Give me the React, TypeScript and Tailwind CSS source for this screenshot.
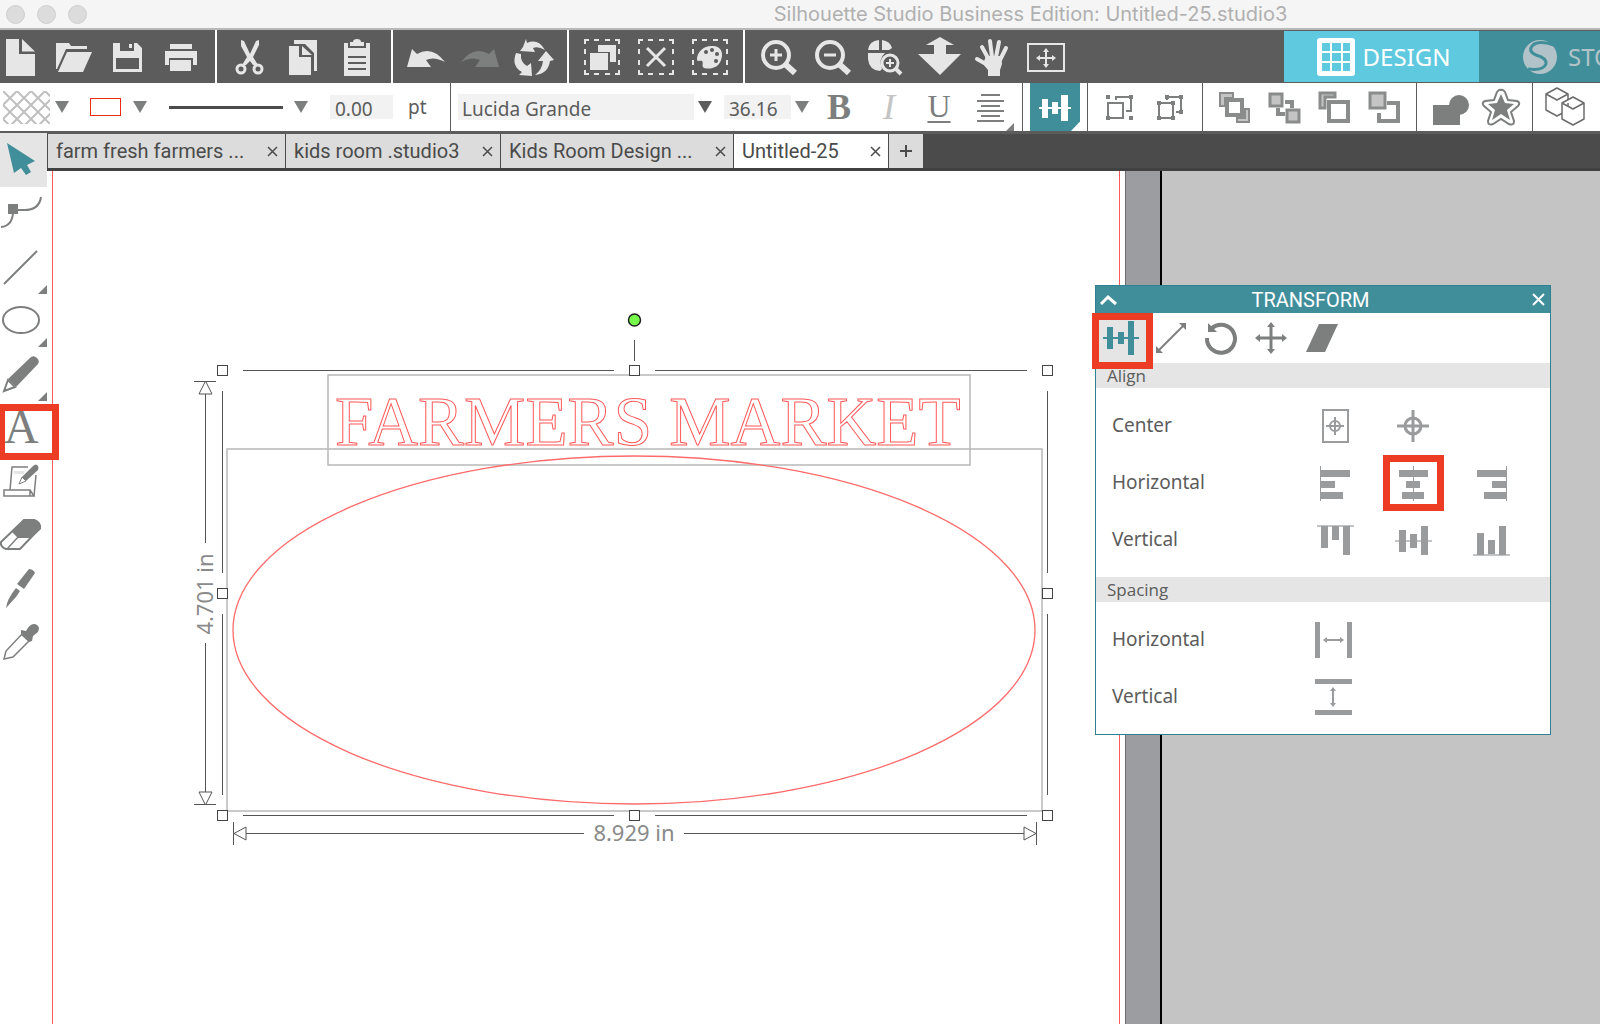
import { useState } from "react";
import type { ReactNode } from "react";

interface IconProps {
	children: ReactNode;
	size?: number;
	className?: string;
}

function Icon({ children, size = 36, className = "" }: IconProps) {
	return (
		<svg
			width={size}
			height={size}
			viewBox={`0 0 ${size} ${size}`}
			className={`block shrink-0 overflow-visible ${className}`}
			fill="currentColor"
			aria-hidden="true"
		>
			{children}
		</svg>
	);
}

interface ToolProps {
	label: string;
	children: ReactNode;
	className?: string;
}

function Tool({ label, children, className = "" }: ToolProps) {
	return (
		<button type="button" aria-label={label} className={`shrink-0 ${className}`}>
			{children}
		</button>
	);
}

function Arrow({ className = "text-[#7d7f7e]" }: { className?: string }) {
	return (
		<svg width="14" height="12" className={`block shrink-0 ${className}`} fill="currentColor" aria-hidden="true">
			<path d="M0 0H14L7 12Z" />
		</svg>
	);
}

function Highlight({ className = "" }: { className?: string }) {
	return (
		<span
			className={`pointer-events-none absolute z-20 h-14 w-[61px] border-[7px] border-[#ec3c23] ${className}`}
		/>
	);
}

const fileTools = [
	{
		label: "New",
		icon: (
			<>
				<path d="M4 0H17V15H33V37H4Z" />
				<path d="M20 0L33 12.500H20Z" />
			</>
		),
	},
	{
		label: "Open",
		icon: (
			<>
				<path d="M0 4H13L15 7H31V10H10L1 30L0 30Z" />
				<path d="M11 13H36L27 33H2Z" />
			</>
		),
	},
	{
		label: "Save",
		icon: (
			<path
				fillRule="evenodd"
				d="M3 4H10V12H24V4H27L32 9V33H3ZM6 19H29V30H6ZM19 5H22V9H19Z"
			/>
		),
	},
	{
		label: "Print",
		icon: (
			<>
				<rect x="6" y="5" width="22" height="5" />
				<path d="M1 12H33V26H29V19H5V26H1Z" />
				<rect x="6" y="21" width="21" height="11" />
			</>
		),
	},
];

const editTools = [
	{
		label: "Cut",
		icon: (
			<>
				<path d="M9 1L12 2L18 15L24 2L27 1L27 6L21 18L26 26H21L18 22L14 26H10L15 18L9 7Z" />
				<circle cx="9" cy="30" r="4" fill="none" stroke="currentColor" strokeWidth="3" />
				<circle cx="26" cy="30" r="4" fill="none" stroke="currentColor" strokeWidth="3" />
			</>
		),
	},
	{
		label: "Copy",
		icon: (
			<>
				<path d="M8 1H31V32H28V14L19 5H8Z" />
				<path d="M3 7H13V18H25V36H3Z" />
				<path d="M16 7L26 16H16Z" />
			</>
		),
	},
	{
		label: "Paste",
		icon: (
			<>
				<path d="M4 4H8V9H26V4H30V37H4Z" />
				<path d="M10 3H13Q13 0 17 0Q21 0 21 3H24V7H10Z" />
				<path d="M8 18H26M8 24H26M8 30H26" stroke="#5b5c5b" strokeWidth="2" />
			</>
		),
	},
];

const historyTools = [
	{
		label: "Undo",
		icon: <path d="M4 10L9 15Q24 6 37 23Q26 17 18 21L23 28H-1Z" />,
	},
	{
		label: "Redo",
		icon: <path fill="#7d7f7e" d="M32 10L27 15Q12 6 -1 23Q10 17 18 21L13 28H37Z" />,
	},
	{
		label: "Sync",
		icon: (
			<>
				<path d="M10 0L11 4Q22 -1 29 11Q22 7 17 9L19 13L4 12L7 8Z" />
				<path d="M0 14Q-5 27 6 33L3 36L16 37L15 24L11 27Q4 23 5 15Z" />
				<path d="M30 12L38 21L34 22Q32 35 19 36Q26 31 27 22L22 22Z" />
			</>
		),
	},
];

const selectTools = [
	{
		label: "Select all",
		icon: (
			<>
				<path d="M14 6H32V23H26V13H14Z" />
				<rect x="6" y="14" width="18" height="17" />
			</>
		),
	},
	{
		label: "Deselect",
		icon: <path d="M9 9L27 27M27 9L9 27" stroke="currentColor" strokeWidth="3" />,
	},
	{
		label: "Select by color",
		icon: (
			<>
				<path d="M19 7C29 6 32 14 29 21C27 28 19 31 12 29C9 27 12 24 10 22C7 21 5 24 5 19C6 12 12 7 19 7Z" />
				<g fill="#5b5c5b">
					<circle cx="14" cy="13" r="2" />
					<circle cx="20" cy="11" r="2" />
					<circle cx="25" cy="15" r="2" />
					<circle cx="24" cy="22" r="2" />
				</g>
			</>
		),
	},
];

const viewTools = [
	{
		label: "Zoom in",
		icon: (
			<>
				<circle cx="16" cy="16" r="13" fill="none" stroke="currentColor" strokeWidth="4" />
				<path d="M25 25L35 34" stroke="currentColor" strokeWidth="6" />
				<path d="M16 10V22M10 16H22" stroke="currentColor" strokeWidth="3" />
			</>
		),
	},
	{
		label: "Zoom out",
		icon: (
			<>
				<circle cx="16" cy="16" r="13" fill="none" stroke="currentColor" strokeWidth="4" />
				<path d="M25 25L35 34" stroke="currentColor" strokeWidth="6" />
				<path d="M10 16H22" stroke="currentColor" strokeWidth="3" />
			</>
		),
	},
	{
		label: "Zoom to selection",
		icon: (
			<>
				<path d="M11 1V11H0Q1 2 11 1ZM14 1Q22 2 24 9L21 11H14Z" />
				<path d="M0 14H17Q10 20 14 30L12 32Q1 31 0 20Z" />
				<circle cx="22" cy="24" r="8" fill="none" stroke="currentColor" strokeWidth="3" />
				<path d="M28 30L33 35" stroke="currentColor" strokeWidth="4" />
				<path d="M22 20V28M18 24H26" stroke="currentColor" strokeWidth="2" />
			</>
		),
	},
	{
		label: "Zoom drag",
		icon: <path d="M18 -2L32 6H24V15H39L18 36L-4 15H12V6H4Z" />,
	},
	{
		label: "Pan",
		icon: (
			<>
				<path d="M12 37V31L7 25L10 17H25L26 25L24 31V37Z" />
				<path
					d="M10 25L1 20M12 19L6 8M16 18L14 2M20 18L23 3M24 21L30 9"
					stroke="currentColor"
					strokeWidth="4"
					strokeLinecap="round"
				/>
			</>
		),
	},
	{
		label: "Fit to page",
		icon: (
			<>
				<rect x="-2" y="5" width="36" height="27" fill="none" stroke="currentColor" strokeWidth="2" />
				<path d="M16 12V26M8 19H24" stroke="currentColor" strokeWidth="2" />
				<path d="M16 9L19 13H13ZM16 29L19 25H13ZM6 19L10 16V22ZM26 19L22 16V22Z" />
			</>
		),
	},
];

interface ToolGroupProps {
	tools: typeof fileTools;
	className?: string;
	dashed?: boolean;
}

function ToolGroup({ tools, className = "", dashed = false }: ToolGroupProps) {
	return (
		<div className={`flex shrink-0 items-center gap-[18px] text-[#e6e6e6] ${className}`}>
			{tools.map((tool) => (
				<Tool key={tool.label} label={tool.label}>
					<Icon>
						{dashed && (
							<path
								d="M1 5V1H5M10 1H15M21 1H26M31 1H35V5M35 10V15M35 21V26M35 31V35H31M26 35H21M15 35H10M5 35H1V31M1 26V21M1 15V10"
								fill="none"
								stroke="currentColor"
								strokeWidth="2"
							/>
						)}
						{tool.icon}
					</Icon>
				</Tool>
			))}
		</div>
	);
}

const arrangeTools = [
	{
		label: "Bring forward",
		icon: (
			<>
				<path d="M1 1H14V6H6V14H1Z" fill="#c4c4c4" stroke="currentColor" strokeWidth="2" />
				<path d="M30 17V30H18V26H26V17Z" fill="#c4c4c4" stroke="currentColor" strokeWidth="2" />
				<rect x="8" y="8" width="15" height="15" fill="#fff" stroke="currentColor" strokeWidth="4" />
			</>
		),
	},
	{
		label: "Send backward",
		icon: (
			<>
				<path d="M16 10H23V16M9 16V22H16" fill="none" stroke="currentColor" strokeWidth="4" />
				<rect x="1" y="2" width="12" height="12" fill="#c4c4c4" stroke="currentColor" strokeWidth="3" />
				<rect x="18" y="18" width="12" height="12" fill="#c4c4c4" stroke="currentColor" strokeWidth="3" />
			</>
		),
	},
	{
		label: "Bring to front",
		icon: (
			<>
				<path d="M1 1H16V5H6V16H1Z" fill="#c4c4c4" stroke="currentColor" strokeWidth="3" />
				<rect x="10" y="10" width="19" height="19" fill="#fff" stroke="currentColor" strokeWidth="4" />
			</>
		),
	},
	{
		label: "Send to back",
		icon: (
			<>
				<path d="M18 11H29V29H10V21" fill="none" stroke="currentColor" strokeWidth="4" />
				<rect x="1" y="1" width="15" height="15" fill="#c4c4c4" stroke="currentColor" strokeWidth="3" />
			</>
		),
	},
];

function QuickBar({ font, setFont }: { font: string; setFont: (value: string) => void }) {
	return (
		<div className="flex h-12 items-center overflow-hidden bg-white font-['Noto_Sans',sans-serif] text-[19px] text-[#5b5c5b]">
			<div className="flex h-full shrink-0 items-center pl-[3px]">
				<Tool label="Fill color" className="flex items-center gap-[5px]">
					<svg width="47" height="33" className="block" aria-hidden="true">
						<defs>
							<pattern id="hatch" width="14" height="14" patternUnits="userSpaceOnUse">
								<path d="M0 0L14 14M14 0L0 14" stroke="#bfbfbf" strokeWidth="2" />
							</pattern>
						</defs>
						<rect width="47" height="33" fill="url(#hatch)" />
					</svg>
					<Arrow />
				</Tool>
				<Tool label="Line color" className="ml-[21px] flex items-center gap-3">
					<span className="block h-[18px] w-[31px] border border-[#ee2a12]" />
					<Arrow />
				</Tool>
				<Tool label="Line style" className="ml-[22px] flex items-center gap-[11px]">
					<span className="block h-[3px] w-[114px] bg-[#4a4b4a]" />
					<Arrow />
				</Tool>
				<input
					aria-label="Line thickness"
					defaultValue="0.00"
					className="ml-[22px] h-6 w-[63px] bg-[#f2f2f2] pt-1 pl-[5px] outline-none"
				/>
				<span className="ml-[15px] w-[42px]">pt</span>
			</div>

			<div className="flex h-full shrink-0 items-center border-l border-[#5b5c5b] pl-[7px]">
				<select
					aria-label="Font"
					value={font}
					onChange={(e) => setFont(e.target.value)}
					className="h-[26px] w-[236px] appearance-none bg-[#f2f2f2] pt-1 pl-1 leading-[22px] outline-none"
				>
					<option>Lucida Grande</option>
					<option>Times</option>
				</select>
				<Arrow className="ml-1 text-[#5b5c5b]" />
				<input
					aria-label="Font size"
					defaultValue="36.16"
					className="ml-3 h-6 w-[67px] bg-[#f2f2f2] pt-1 pl-[5px] outline-none"
				/>
				<Arrow className="ml-1 text-[#7d7f7e]" />
				<div className="flex h-full items-center font-['Liberation_Serif',serif] text-4xl text-[#7d7f7e]">
					<Tool label="Bold" className="w-[60px] font-bold">B</Tool>
					<Tool label="Italic" className="w-10 italic text-[#c4c4c4]">I</Tool>
					<Tool label="Underline" className="mr-2 w-[60px] text-[32px] underline decoration-2 underline-offset-4">U</Tool>
				</div>
				<Tool label="Justify" className="flex h-full items-center text-[#7d7f7e]">
					<Icon size={27}>
						<path d="M4 1H23M0 7H27M4 12H23M0 17H27M4 22H23M0 27H27" stroke="currentColor" strokeWidth="2" />
					</Icon>
					<svg width="8" height="8" className="ml-[2px] self-end" fill="currentColor" aria-hidden="true">
						<path d="M8 0V8H0Z" />
					</svg>
				</Tool>
			</div>

			<div className="ml-2 flex h-full shrink-0 items-center border-x border-[#5b5c5b] px-[7px]">
				<button
					type="button"
					aria-label="Transform"
					className="flex h-full w-[50px] items-center justify-center bg-[#418e9b] text-white [clip-path:polygon(0_0,100%_0,100%_80%,82%_100%,0_100%)]"
				>
					<Icon size={32}>
						<rect x="3" y="8" width="6" height="19" />
						<rect x="13" y="11" width="6" height="12" />
						<rect x="22" y="4" width="7" height="26" />
						<rect x="0" y="16" width="32" height="2" />
					</Icon>
				</button>
			</div>

			<div className="flex h-full shrink-0 items-center gap-6 px-[18px] text-[#7d7f7e]">
				<Tool label="Group">
					<Icon size={27}>
						<path d="M0 1H4V5H0ZM23 1H27V5H23ZM23 22H27V26H23ZM0 22H4V26H0Z" />
						<path d="M2 9H17V24H2ZM10 6V3H25V17H20" fill="none" stroke="currentColor" strokeWidth="2" />
					</Icon>
				</Tool>
				<Tool label="Ungroup">
					<Icon size={27}>
						<path d="M0 7H4V11H0ZM14 7H18V11H14ZM0 22H4V26H0ZM14 22H18V26H14ZM8 1H12V5H8ZM22 1H26V5H22ZM22 16H26V20H22Z" />
						<path d="M2 9H16V24H2ZM10 6V3H24V18H19" fill="none" stroke="currentColor" strokeWidth="2" />
					</Icon>
				</Tool>
			</div>

			<div className="flex h-full shrink-0 items-center gap-[19px] border-x border-[#5b5c5b] px-4 text-[#8a8c8b]">
				{arrangeTools.map((tool) => (
					<Tool key={tool.label} label={tool.label}>
						<Icon size={31}>{tool.icon}</Icon>
					</Tool>
				))}
			</div>

			<div className="flex h-full shrink-0 items-center gap-[14px] pr-[13px] pl-4 text-[#7d7f7e]">
				<Tool label="Weld">
					<Icon>
						<rect x="0" y="16" width="27" height="20" />
						<circle cx="26" cy="16" r="10" />
					</Icon>
				</Tool>
				<Tool label="Offset">
					<Icon>
						<path
							d="M18 1Q20 0 22 3L25 11L34 12Q38 14 35 17L28 23L31 32Q31 37 26 35L18 30L10 35Q5 37 5 32L8 23L1 17Q-2 14 2 12L11 11L14 3Q16 0 18 1Z"
							fill="none"
							stroke="currentColor"
							strokeWidth="2"
						/>
						<path d="M18 5L22 14L31 15L24 21L27 31L18 25L9 31L12 21L5 15L14 14Z" />
					</Icon>
				</Tool>
			</div>

			<div className="flex h-full shrink-0 items-center border-l border-[#5b5c5b] pl-3 text-[#6b6c6b]">
				<Tool label="Nest">
					<Icon size={40}>
						<g fill="#fff" stroke="currentColor" strokeWidth="1.500" strokeLinejoin="round">
							<path d="M12 1L23 7V23L12 29L1 23V7ZM1 7L12 13L23 7" />
							<path d="M28 10L39 16V32L28 38L17 32V16ZM17 16L28 22L39 16" />
						</g>
					</Icon>
				</Tool>
			</div>
		</div>
	);
}

const drawTools = [
	{ label: "Select", flyout: false, icon: <path fill="#418e9b" d="M3 1L31 19L23 23L27 30L22 33L17 26L10 31Z" /> },
	{
		label: "Edit points",
		flyout: false,
		icon: (
			<>
				<path d="M9 9V18Q8 31 -3 32M9 15H18Q35 16 37 2" fill="none" stroke="currentColor" strokeWidth="2" />
				<rect x="4" y="9" width="10" height="10" />
			</>
		),
	},
	{ label: "Line", flyout: true, icon: <path d="M0 35L33 2" stroke="currentColor" strokeWidth="2" /> },
	{
		label: "Ellipse",
		flyout: true,
		icon: <ellipse cx="17" cy="18" rx="18" ry="13" fill="none" stroke="currentColor" strokeWidth="2" />,
	},
	{
		label: "Freehand",
		flyout: true,
		icon: (
			<>
				<path d="M4 23L27 1Q30 -1 33 2Q36 5 34 8L12 31Z" />
				<path d="M4 24L11 31L0 35Z" fill="#fff" stroke="currentColor" strokeWidth="2" />
			</>
		),
	},
	{ label: "Text", flyout: false, icon: null },
	{
		label: "Sketch",
		flyout: false,
		icon: (
			<>
				<path d="M32 12L30 33M24 4H8L6 27" fill="none" stroke="currentColor" strokeWidth="1.500" />
				<path d="M0 27H26V33H0ZM26 27L30 33H26" fill="#fff" stroke="currentColor" strokeWidth="1.500" />
				<path d="M10 8H20V11H10Z" fill="#e5e5e5" />
				<path d="M18 14L29 3Q32 0 34 3Q35 5 34 7L22 18Z" />
				<path d="M18 14L22 18L15 21Z" fill="#fff" stroke="currentColor" strokeWidth="1" />
			</>
		),
	},
	{
		label: "Eraser",
		flyout: false,
		icon: (
			<>
				<path
					d="M20 4H30Q36 6 36 12L16 33H2Q-4 31 -3 26Z"
					fill="#fff"
					stroke="currentColor"
					strokeWidth="2"
				/>
				<path d="M20 3H30Q38 6 37 13L27 22H14L8 16ZM16 20L4 33L3 32L14 20Z" />
			</>
		),
	},
	{
		label: "Knife",
		flyout: false,
		icon: (
			<>
				<path d="M25 -1Q29 -1 31 3L20 19L13 14Z" />
				<path d="M12 18L16 21L12 27L2 38Q3 29 12 18Z" />
			</>
		),
	},
	{
		label: "Eyedropper",
		flyout: false,
		icon: (
			<>
				<path d="M18 11L25 18L9 34L0 36L2 28Z" fill="#fff" stroke="currentColor" strokeWidth="1.500" />
				<path d="M17 7L22 8Q26 0 31 1Q37 3 34 9L29 13L28 18L25 19L17 12Z" />
			</>
		),
	},
];

function ToolColumn() {
	return (
		<div className="w-[47px] shrink-0 bg-white text-[#7d7f7e]">
			<div className="grid h-[535px] grid-rows-10">
				{drawTools.map((tool) => (
					<button
						key={tool.label}
						type="button"
						aria-label={tool.label}
						className={
							tool.label === "Select"
								? "relative flex items-center bg-[#e5e5e5] pl-1"
								: "relative flex items-center pl-1"
						}
					>
						{tool.icon ? (
							<Icon>{tool.icon}</Icon>
						) : (
							<>
								<span className="font-['Liberation_Serif',serif] text-5xl leading-none">A</span>
								<Highlight className="top-[3px] -left-[2px]" />
							</>
						)}
						{tool.flyout && (
							<svg width="9" height="9" className="absolute right-0 bottom-0" fill="currentColor" aria-hidden="true">
								<path d="M9 0V9H0Z" />
							</svg>
						)}
					</button>
				))}
			</div>
		</div>
	);
}

const documents = [
	{ name: "farm fresh farmers ...", width: "w-[238px]" },
	{ name: "kids room .studio3", width: "w-[215px]" },
	{ name: "Kids Room Design ...", width: "w-[233px]" },
	{ name: "Untitled-25", width: "w-[155px]" },
];

function DocumentTabs({ active, setActive }: { active: string; setActive: (name: string) => void }) {
	return (
		<div className="flex h-[38px] border-t border-b-[3px] border-t-[#5b5c5b] border-b-[#404140] bg-[#4a4b4a] pl-px font-['Roboto',sans-serif] text-xl text-[#4a4b4a]">
			{documents.map((doc) => (
				<div
					key={doc.name}
					className={`flex shrink-0 items-center justify-between border-r border-[#4a4b4a] pr-[7px] pl-2 ${doc.width} ${
						doc.name === active ? "bg-white" : "bg-[#dcdcdc]"
					}`}
				>
					<button type="button" className="whitespace-nowrap" onClick={() => setActive(doc.name)}>
						{doc.name}
					</button>
					<button type="button" aria-label={`Close ${doc.name}`}>
						<svg width="11" height="11" className="block" aria-hidden="true">
							<path d="M1 1L10 10M10 1L1 10" stroke="#4a4b4a" strokeWidth="1.500" />
						</svg>
					</button>
				</div>
			))}
			<button type="button" aria-label="New document" className="flex w-[34px] items-center justify-center bg-[#dcdcdc]">
				<svg width="12" height="12" aria-hidden="true">
					<path d="M6 0V12M0 6H12" stroke="#4a4b4a" strokeWidth="2" />
				</svg>
			</button>
		</div>
	);
}

const handles = [
	[222, 370],
	[634, 370],
	[1047, 370],
	[222, 593],
	[1047, 593],
	[222, 815],
	[634, 815],
	[1047, 815],
];

function Artwork() {
	return (
		<svg width="1078" height="853" viewBox="47 171 1078 853" className="block" fill="none">
			<g stroke="#b8b8b8" strokeWidth="1.500">
				<rect x="328" y="375" width="642" height="90" />
				<rect x="227" y="449" width="815" height="362" />
			</g>
			<ellipse cx="634" cy="630" rx="401" ry="174" stroke="#ff6b6b" strokeWidth="1.300" />
			<text
				x="335"
				y="445"
				stroke="#ff5a5a"
				strokeWidth="1"
				className="font-['Liberation_Serif',serif] text-[69px]"
			>
				FARMERS MARKET
			</text>
			<path
				d="M243 370.500H614M655 370.500H1027M243 815.500H614M655 815.500H1027M222.500 391V573M222.500 614V795M1047.500 391V573M1047.500 614V795M634.500 340V361"
				stroke="#555"
			/>
			<path
				d="M205.500 394V543M194 381.500H216M205.500 381L212 394H199ZM205.500 643V792M194 804.500H216M205.500 805L212 792H199ZM246 833.500H584M233.500 822V845M234 833.500L246 827V840ZM684 833.500H1024M1036.500 822V845M1036 833.500L1024 827V840Z"
				stroke="#555"
			/>
			<g fill="#fff" stroke="#444">
				{handles.map(([x, y]) => (
					<rect key={`${x}-${y}`} x={x - 4.5} y={y - 4.5} width="10" height="10" />
				))}
			</g>
			<circle cx="634.500" cy="320" r="6" fill="#76f94b" stroke="#222" strokeWidth="1.500" />
			<g fill="#8a8a8a" className="font-['Noto_Sans',sans-serif] text-[22px]" textAnchor="middle">
				<text x="634" y="841">8.929 in</text>
				<text transform="translate(213 594) rotate(-90)">4.701 in</text>
			</g>
		</svg>
	);
}

const hBars = (x1: number, x2: number, x3: number) => (
	<>
		<rect x={x1} y="7" width="29" height="7" />
		<rect x={x2} y="18" width="14" height="7" />
		<rect x={x3} y="29" width="22" height="7" />
	</>
);

const vBars = (y1: number, y2: number, y3: number) => (
	<>
		<rect x="6" y={y1} width="7" height="22" />
		<rect x="17" y={y2} width="7" height="14" />
		<rect x="28" y={y3} width="7" height="29" />
	</>
);

const alignRows = [
	{
		label: "Center",
		tools: [
			{
				label: "Center to page",
				icon: (
					<>
						<rect x="8" y="4" width="25" height="32" fill="none" stroke="currentColor" strokeWidth="2" />
						<circle cx="20" cy="20" r="5" fill="none" stroke="currentColor" strokeWidth="2" />
						<path d="M20 11V29M11 20H29" stroke="currentColor" strokeWidth="2" />
					</>
				),
			},
			{
				label: "Center objects",
				icon: (
					<>
						<circle cx="20" cy="20" r="8" fill="none" stroke="currentColor" strokeWidth="3" />
						<path d="M20 4V36M4 20H36" stroke="currentColor" strokeWidth="3" />
					</>
				),
			},
		],
	},
	{
		label: "Horizontal",
		tools: [
			{ label: "Align left", icon: <>{hBars(6, 6, 6)}<rect x="5" y="3" width="1" height="35" /></> },
			{ label: "Align center", icon: <>{hBars(6, 13, 9)}<rect x="20" y="3" width="1" height="35" /></> },
			{ label: "Align right", icon: <>{hBars(6, 21, 13)}<rect x="35" y="3" width="1" height="35" /></> },
		],
	},
	{
		label: "Vertical",
		tools: [
			{ label: "Align top", icon: <>{vBars(6, 6, 6)}<rect x="2" y="5" width="37" height="2" opacity="0.600" /></> },
			{ label: "Align middle", icon: <>{vBars(10, 14, 6)}<rect x="2" y="20" width="37" height="2" opacity="0.600" /></> },
			{ label: "Align bottom", icon: <>{vBars(13, 20, 6)}<rect x="2" y="34" width="37" height="2" opacity="0.600" /></> },
		],
	},
];

const spacingRows = [
	{
		label: "Horizontal",
		tools: [
			{
				label: "Space horizontally",
				icon: (
					<>
						<path d="M0 2H5V38H0ZM32 2H37V38H32Z" />
						<path d="M10 20H26" stroke="currentColor" strokeWidth="2" />
						<path d="M8 20L12 17V23ZM29 20L25 17V23Z" />
					</>
				),
			},
		],
	},
	{
		label: "Vertical",
		tools: [
			{
				label: "Space vertically",
				icon: (
					<>
						<path d="M0 2H37V7H0ZM0 33H37V38H0Z" />
						<path d="M18 12V28" stroke="currentColor" strokeWidth="2" />
						<path d="M18 10L21 14H15ZM18 30L21 26H15Z" />
					</>
				),
			},
		],
	},
];

function PanelRows({ rows, title }: { rows: typeof alignRows; title: string }) {
	return (
		<section>
			<h2 className="h-[25px] bg-[#e5e5e5] pl-[11px] font-['Open_Sans',sans-serif] text-[17px] leading-[26px]">{title}</h2>
			<div className="py-[9px]">
				{rows.map((row) => (
					<div key={row.label} className="flex h-[57px] items-center pl-4">
						<span className="w-[184px] shrink-0 text-[19px]">{row.label}</span>
						{row.tools.map((tool) => (
							<button
								key={tool.label}
								type="button"
								aria-label={tool.label}
								className="relative flex h-14 w-[78px] items-center justify-center text-[#9a9b9c]"
							>
								<Icon size={40}>{tool.icon}</Icon>
								{tool.label === "Align center" && <Highlight className="top-0 left-[9px]" />}
							</button>
						))}
					</div>
				))}
			</div>
		</section>
	);
}

function TransformPanel() {
	return (
		<aside className="absolute top-[114px] left-[1048px] w-[456px] border border-[#2f8090] bg-white font-['Noto_Sans',sans-serif] text-[#5b5c5b]">
			<header className="flex h-[27px] items-center justify-between bg-[#418e9b] px-1 text-white">
				<button type="button" aria-label="Collapse">
					<svg width="17" height="12" aria-hidden="true">
						<path d="M1 10L8 3L16 10" fill="none" stroke="currentColor" strokeWidth="3" />
					</svg>
				</button>
				<h1 className="pr-7 font-['Roboto',sans-serif] text-xl">TRANSFORM</h1>
				<button type="button" aria-label="Close panel" className="pr-px">
					<svg width="13" height="13" aria-hidden="true">
						<path d="M1 1L12 12M12 1L1 12" stroke="currentColor" strokeWidth="2" />
					</svg>
				</button>
			</header>
			<nav className="flex h-[50px] items-center text-[#7d7f7e]">
				<Tool label="Align" className="relative flex h-full w-[50px] items-center justify-center bg-[#e5e5e5] text-[#418e9b]">
					<Icon size={36}>
						<rect x="4" y="7" width="6" height="22" />
						<rect x="15" y="12" width="6" height="12" />
						<rect x="25" y="1" width="6" height="34" />
						<rect x="0" y="17" width="36" height="2" />
					</Icon>
					<Highlight className="top-0 -left-1" />
				</Tool>
				<Tool label="Scale" className="flex w-[50px] justify-center">
					<Icon size={32}>
						<path d="M3 29L29 3" stroke="currentColor" strokeWidth="2" />
						<path d="M31 1V8L24 1ZM1 31V24L8 31Z" />
					</Icon>
				</Tool>
				<Tool label="Rotate" className="flex w-[50px] justify-center">
					<Icon size={34}>
						<path d="M3 17A14 14 0 1 0 8 7" fill="none" stroke="currentColor" strokeWidth="4" />
						<path d="M4 2V11H13Z" />
					</Icon>
				</Tool>
				<Tool label="Move" className="flex w-[50px] justify-center">
					<Icon size={32}>
						<path d="M16 3V29M3 16H29" stroke="currentColor" strokeWidth="3" />
						<path d="M16 0L20 5H12ZM16 32L20 27H12ZM0 16L5 12V20ZM32 16L27 12V20Z" />
					</Icon>
				</Tool>
				<Tool label="Shear" className="flex w-[50px] justify-center">
					<Icon size={32}>
						<path d="M14 2H33L20 30H1Z" />
					</Icon>
				</Tool>
			</nav>
			<PanelRows title="Align" rows={alignRows} />
			<PanelRows title="Spacing" rows={spacingRows} />
		</aside>
	);
}

function App() {
	const [font, setFont] = useState("Lucida Grande");
	const [active, setActive] = useState("Untitled-25");

	return (
		<div className="flex min-h-screen flex-col overflow-hidden bg-white">
			<div className="relative flex h-[30px] items-center border-b-2 border-[#b8b8b8] bg-[#f5f5f5]">
				<div className="absolute left-[6px] flex gap-3">
					<span className="size-[19px] rounded-full border border-[#cfcfcf] bg-[#dcdcdc]" />
					<span className="size-[19px] rounded-full border border-[#cfcfcf] bg-[#dcdcdc]" />
					<span className="size-[19px] rounded-full border border-[#cfcfcf] bg-[#dcdcdc]" />
				</div>
				<p className="w-full pl-[461px] text-center font-['Inter',sans-serif] text-xl text-[#b0b0b0]">
					Silhouette Studio Business Edition: Untitled-25.studio3
				</p>
			</div>

			<div className="flex h-[53px] overflow-hidden bg-[#5b5c5b]">
				<ToolGroup tools={fileTools} className="border-r-2 border-white pr-[15px] pl-[2px]" />
				<ToolGroup tools={editTools} className="border-r-2 border-white px-[15px]" />
				<ToolGroup tools={historyTools} className="border-r-2 border-white px-[15px]" />
				<ToolGroup tools={selectTools} dashed className="border-r-2 border-white px-[15px]" />
				<ToolGroup tools={viewTools} className="px-[15px]" />
				<div className="ml-auto flex shrink-0 py-px font-['Noto_Sans',sans-serif] text-2xl">
					<a href="#design" className="flex w-[195px] items-center justify-center gap-2 bg-[#5fc9e0] pl-1 text-white">
						<Icon size={38}>
							<path
								fillRule="evenodd"
								d="M3 0H35Q38 0 38 3V35Q38 38 35 38H3Q0 38 0 35V3Q0 0 3 0ZM5 5H13V13H5ZM15 5H24V13H15ZM26 5H33V13H26ZM5 15H13V23H5ZM15 15H24V23H15ZM26 15H33V23H26ZM5 25H13V33H5ZM15 25H24V33H15ZM26 25H33V33H26Z"
							/>
						</Icon>
						DESIGN
					</a>
					<a
						href="#store"
						className="flex w-[121px] items-center gap-[10px] overflow-hidden bg-[#418e9b] pl-11 text-[#b1c3c8]"
					>
						<Icon size={35}>
							<circle cx="17" cy="18" r="17" />
							<path
								d="M31 6Q16 1 10 6Q4 12 13 16Q24 19 23 25Q20 32 5 30"
								fill="none"
								stroke="#418e9b"
								strokeWidth="3"
							/>
						</Icon>
						STORE
					</a>
				</div>
			</div>

			<QuickBar font={font} setFont={setFont} />

			<main className="flex flex-1 border-t-2 border-[#5b5c5b]">
				<ToolColumn />
				<div className="flex min-w-0 flex-1 flex-col">
					<DocumentTabs active={active} setActive={setActive} />
					<div className="relative flex flex-1 bg-[#c4c4c4]">
						<div className="shrink-0 bg-white px-[5px]">
							<div className="h-full border-x border-[#ff5a5a]">
								<div className="-mx-[6px]">
									<Artwork />
								</div>
							</div>
						</div>
						<div className="w-[37px] shrink-0 border-r-2 border-l border-r-black border-l-[#6b6c6b] bg-[#9c9da0]" />
						<TransformPanel />
					</div>
				</div>
			</main>
		</div>
	);
}

export default App;
